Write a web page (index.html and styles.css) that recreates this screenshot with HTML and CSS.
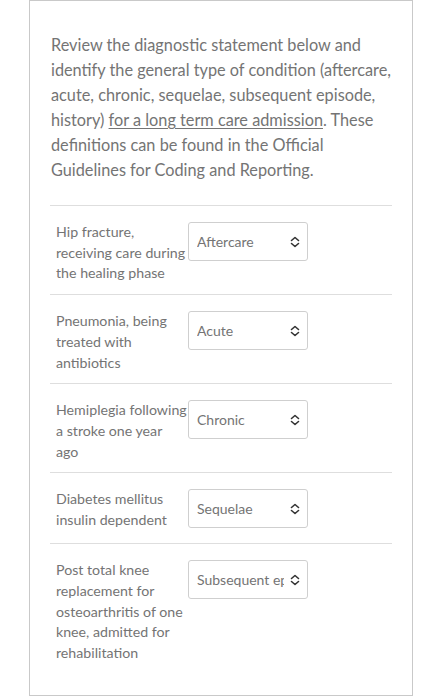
FILE: index.html
```html
<!DOCTYPE html>
<html lang="en">
<head>
<meta charset="utf-8">
<title>Matching question</title>
<link rel="stylesheet" href="styles.css">
</head>
<body>
<div class="frame">
  <p class="prompt">Review the diagnostic statement below and identify the general type of condition (aftercare, acute, chronic, sequelae, subsequent episode, history) <u>for a long term care admission</u>. These definitions can be found in the Official Guidelines for Coding and Reporting.</p>
  <div class="rows">
    <div class="row">
      <div class="label">Hip fracture, receiving care during the healing phase</div>
      <div class="pick">
        <select class="sel"><option>Aftercare</option></select>
        <svg class="arrow" viewBox="0 0 10 12" width="10" height="12"><path d="M1.5 4.5 L5 1.5 L8.5 4.5 M1.5 7.5 L5 10.5 L8.5 7.5" fill="none" stroke="#333" stroke-width="1.6" stroke-linecap="round" stroke-linejoin="round"/></svg>
      </div>
    </div>
    <div class="row">
      <div class="label">Pneumonia, being treated with antibiotics</div>
      <div class="pick">
        <select class="sel"><option>Acute</option></select>
        <svg class="arrow" viewBox="0 0 10 12" width="10" height="12"><path d="M1.5 4.5 L5 1.5 L8.5 4.5 M1.5 7.5 L5 10.5 L8.5 7.5" fill="none" stroke="#333" stroke-width="1.6" stroke-linecap="round" stroke-linejoin="round"/></svg>
      </div>
    </div>
    <div class="row">
      <div class="label">Hemiplegia following a stroke one year ago</div>
      <div class="pick">
        <select class="sel"><option>Chronic</option></select>
        <svg class="arrow" viewBox="0 0 10 12" width="10" height="12"><path d="M1.5 4.5 L5 1.5 L8.5 4.5 M1.5 7.5 L5 10.5 L8.5 7.5" fill="none" stroke="#333" stroke-width="1.6" stroke-linecap="round" stroke-linejoin="round"/></svg>
      </div>
    </div>
    <div class="row">
      <div class="label">Diabetes mellitus insulin dependent</div>
      <div class="pick">
        <select class="sel"><option>Sequelae</option></select>
        <svg class="arrow" viewBox="0 0 10 12" width="10" height="12"><path d="M1.5 4.5 L5 1.5 L8.5 4.5 M1.5 7.5 L5 10.5 L8.5 7.5" fill="none" stroke="#333" stroke-width="1.6" stroke-linecap="round" stroke-linejoin="round"/></svg>
      </div>
    </div>
    <div class="row">
      <div class="label">Post total knee replacement for osteoarthritis of one knee, admitted for rehabilitation</div>
      <div class="pick">
        <select class="sel"><option>Subsequent episode</option></select>
        <svg class="arrow" viewBox="0 0 10 12" width="10" height="12"><path d="M1.5 4.5 L5 1.5 L8.5 4.5 M1.5 7.5 L5 10.5 L8.5 7.5" fill="none" stroke="#333" stroke-width="1.6" stroke-linecap="round" stroke-linejoin="round"/></svg>
      </div>
    </div>
  </div>
</div>
</body>
</html>
```
FILE: styles.css
```css
html, body {
  margin: 0;
  padding: 0;
  background: #fff;
}
body {
  font-family: Lato, "Open Sans", sans-serif;
  color: #747474;
}
.frame {
  box-sizing: border-box;
  width: 384px;
  height: 696px;
  margin: 0 0 0 29px;
  border: 1px solid #c9c9c9;
  padding: 31px 20px 10px 20px;
}
.prompt {
  margin: 0 0 0 1px;
  font-size: 16.3px;
  line-height: 25px;
}
.prompt u {
  text-decoration-thickness: 1px;
  text-underline-offset: 2px;
}
.rows {
  margin-top: 23px;
}
.row {
  display: flex;
  align-items: flex-start;
  border-top: 1px solid #dedede;
  padding: 16px 0 10px 6px;
}
.label {
  width: 131px;
  flex: none;
  font-size: 14.2px;
  line-height: 20.7px;
}
.pick {
  position: relative;
  width: 120px;
  height: 39px;
  margin-left: 1px;
  margin-bottom: 5px;
}
.sel {
  appearance: none;
  -webkit-appearance: none;
  box-sizing: border-box;
  width: 120px;
  height: 39px;
  margin: 0;
  border: 1px solid #cfcfcf;
  border-radius: 3px;
  background: #fff;
  padding: 0 23px 0 8px;
  font-family: Lato, "Open Sans", sans-serif;
  font-size: 14px;
  color: #747474;
  outline: none;
}
.arrow {
  position: absolute;
  left: 102px;
  top: 14px;
  pointer-events: none;
}
```
